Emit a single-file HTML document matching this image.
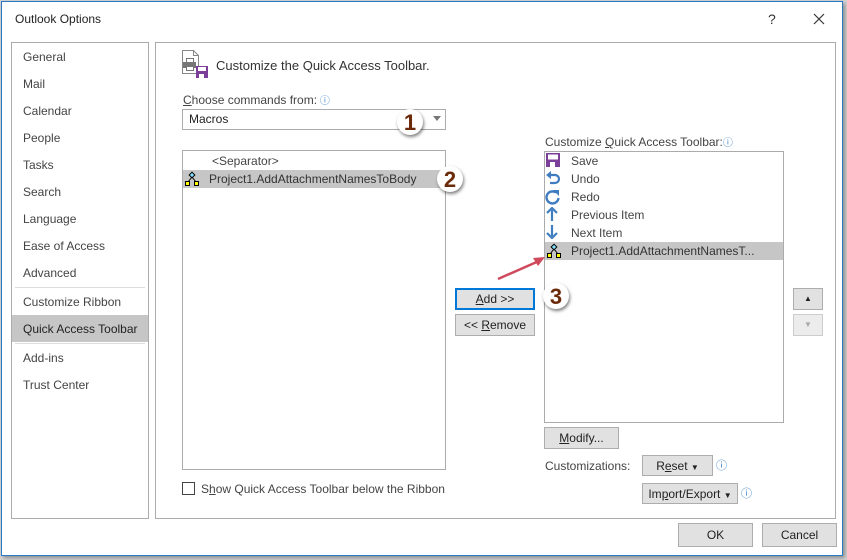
<!DOCTYPE html>
<html><head><meta charset="utf-8"><style>
*{box-sizing:border-box;margin:0;padding:0}
body{width:847px;height:560px;background:#d4d4d4;position:relative;overflow:hidden;font-family:"Liberation Sans",sans-serif;font-size:12px;color:#444}
.a{position:absolute}
.win{left:1px;top:1px;width:842px;height:555px;background:#fff;border:1px solid #2b78c5;box-shadow:2px 2px 4px rgba(0,0,0,.35)}
.box{border:1px solid #ababab;background:#fff}
.btn{border:1px solid #adadad;background:#e1e1e1;color:#222;text-align:center;line-height:20px}
.nav{left:23px;color:#444;font-size:12px}
.badge{width:26px;height:26px;border-radius:50%;background:#fff;box-shadow:1px 2px 3px rgba(0,0,0,.5);color:#6b2a0a;font-weight:bold;font-size:22px;text-align:center;line-height:27px}
.row{height:18px;line-height:18px}
u{text-decoration:underline}
</style></head><body>
<div class="a win"></div>
<div class="a" style="left:15px;top:12px;font-size:12px;color:#222">Outlook Options</div>
<div class="a" style="left:768px;top:11px;font-size:14px;color:#333">?</div>
<svg class="a" style="left:813px;top:13px" width="12" height="12" viewBox="0 0 12 12"><path d="M1 1L11 11M11 1L1 11" stroke="#333" stroke-width="1.2"/></svg>

<div class="a box" style="left:11px;top:42px;width:138px;height:477px"></div>
<div class="a nav" style="top:50px">General</div>
<div class="a nav" style="top:77px">Mail</div>
<div class="a nav" style="top:104px">Calendar</div>
<div class="a nav" style="top:131px">People</div>
<div class="a nav" style="top:158px">Tasks</div>
<div class="a nav" style="top:185px">Search</div>
<div class="a nav" style="top:212px">Language</div>
<div class="a nav" style="top:239px">Ease of Access</div>
<div class="a nav" style="top:266px">Advanced</div>
<div class="a" style="left:15px;top:287px;width:130px;height:1px;background:#ddd"></div>
<div class="a nav" style="top:295px">Customize Ribbon</div>
<div class="a" style="left:12px;top:315px;width:136px;height:27px;background:#c6c6c6"></div>
<div class="a nav" style="top:322px;color:#222">Quick Access Toolbar</div>
<div class="a" style="left:15px;top:343px;width:130px;height:1px;background:#ddd"></div>
<div class="a nav" style="top:351px">Add-ins</div>
<div class="a nav" style="top:378px">Trust Center</div>

<div class="a box" style="left:155px;top:42px;width:681px;height:477px"></div>
<svg class="a" style="left:180px;top:48px" width="30" height="32" viewBox="0 0 30 32">
<path d="M2.5 2.5h11l5 5v18h-16z" fill="#fff" stroke="#888"/><path d="M13.5 2.5v5h5" fill="none" stroke="#888"/>
<rect x="6.5" y="10.5" width="7" height="4" fill="#fff" stroke="#777"/><rect x="3" y="14" width="13" height="6" fill="#777"/><rect x="6.5" y="18.5" width="7" height="4" fill="#fff" stroke="#777"/>
<rect x="16" y="18" width="12" height="12" fill="#7b3f99"/><rect x="18" y="19" width="8" height="4" fill="#fff"/><rect x="19" y="26" width="5" height="4" fill="#fff"/></svg>
<div class="a" style="left:216px;top:58px;font-size:13px;color:#333">Customize the Quick Access Toolbar.</div>
<div class="a" style="left:183px;top:92px"><u>C</u>hoose commands from:<span style="color:#3a7fc4;font-size:10px"> ⓘ</span></div>
<div class="a box" style="left:182px;top:109px;width:264px;height:21px;padding-left:6px;line-height:19px;color:#222">Macros</div>
<div class="a" style="left:433px;top:116px;border:4px solid transparent;border-top:5px solid #777"></div>
<div class="a badge" style="left:397px;top:109px">1</div>

<div class="a box" style="left:182px;top:150px;width:264px;height:320px"></div>
<div class="a row" style="left:212px;top:152px">&lt;Separator&gt;</div>
<div class="a row" style="left:183px;top:170px;width:262px;background:#c6c6c6"></div>
<svg class="a" style="left:184px;top:171px" width="16" height="16" viewBox="0 0 16 16"><path d="M8 6L4 11M8 6l4 5" stroke="#000"/><rect x="6" y="2" width="4" height="4" fill="#7fe0ff" stroke="#000" transform="rotate(45 8 4)"/><rect x="1.5" y="10.5" width="4" height="4" fill="#ff0" stroke="#000"/><rect x="10.5" y="10.5" width="4" height="4" fill="#ff0" stroke="#000"/></svg>
<div class="a row" style="left:209px;top:170px;color:#333">Project1.AddAttachmentNamesToBody</div>
<div class="a badge" style="left:437px;top:166px">2</div>

<div class="a" style="left:182px;top:482px;width:13px;height:13px;border:1px solid #444;background:#fff"></div>
<div class="a" style="left:201px;top:482px">S<u>h</u>ow Quick Access Toolbar below the Ribbon</div>

<div class="a btn" style="left:455px;top:288px;width:80px;height:22px;border:2px solid #0078d7;line-height:18px"><u>A</u>dd &gt;&gt;</div>
<div class="a btn" style="left:455px;top:314px;width:80px;height:22px">&lt;&lt; <u>R</u>emove</div>

<div class="a" style="left:545px;top:134px">Customize <u>Q</u>uick Access Toolbar:<span style="color:#3a7fc4;font-size:10px">ⓘ</span></div>
<div class="a box" style="left:544px;top:151px;width:240px;height:272px"></div>
<svg class="a" style="left:546px;top:153px" width="14" height="14" viewBox="0 0 14 14"><rect x="0" y="0" width="14" height="14" fill="#7b3f99"/><rect x="2" y="1.5" width="10" height="5" fill="#fff"/><rect x="4" y="9" width="5" height="5" fill="#fff"/></svg>
<div class="a row" style="left:571px;top:152px">Save</div>
<svg class="a" style="left:545px;top:171px" width="16" height="16" viewBox="0 0 16 16"><path d="M4 4h6a4 4 0 0 1 0 8H5" fill="none" stroke="#3f7dc0" stroke-width="2.2"/><path d="M1 4l5-4v8z" fill="#3f7dc0"/></svg>
<div class="a row" style="left:571px;top:170px">Undo</div>
<svg class="a" style="left:545px;top:189px" width="16" height="16" viewBox="0 0 16 16"><path d="M11 3.5A6 6 0 1 0 13.5 9" fill="none" stroke="#3f7dc0" stroke-width="2.4"/><path d="M8 1h6v6z" fill="#3f7dc0"/></svg>
<div class="a row" style="left:571px;top:188px">Redo</div>
<svg class="a" style="left:546px;top:207px" width="12" height="14" viewBox="0 0 12 14"><path d="M6 3v11" stroke="#3f7dc0" stroke-width="2.2"/><path d="M1 6l5-5 5 5" fill="none" stroke="#3f7dc0" stroke-width="2.2"/></svg>
<div class="a row" style="left:571px;top:206px">Previous Item</div>
<svg class="a" style="left:546px;top:225px" width="12" height="14" viewBox="0 0 12 14"><path d="M6 0v11" stroke="#3f7dc0" stroke-width="2.2"/><path d="M1 8l5 5 5-5" fill="none" stroke="#3f7dc0" stroke-width="2.2"/></svg>
<div class="a row" style="left:571px;top:224px">Next Item</div>
<div class="a row" style="left:545px;top:242px;width:238px;background:#c6c6c6"></div>
<svg class="a" style="left:546px;top:243px" width="16" height="16" viewBox="0 0 16 16"><path d="M8 6L4 11M8 6l4 5" stroke="#000"/><rect x="6" y="2" width="4" height="4" fill="#7fe0ff" stroke="#000" transform="rotate(45 8 4)"/><rect x="1.5" y="10.5" width="4" height="4" fill="#ff0" stroke="#000"/><rect x="10.5" y="10.5" width="4" height="4" fill="#ff0" stroke="#000"/></svg>
<div class="a row" style="left:571px;top:242px;color:#333">Project1.AddAttachmentNamesT...</div>
<svg class="a" style="left:495px;top:252px" width="52" height="30" viewBox="0 0 52 30"><path d="M3 27L44 9" stroke="#d04a5e" stroke-width="2.5"/><path d="M50 5L38 6l5 8z" fill="#d04a5e"/></svg>
<div class="a badge" style="left:543px;top:283px">3</div>

<div class="a btn" style="left:793px;top:288px;width:30px;height:22px;font-size:8px">▲</div>
<div class="a btn" style="left:793px;top:314px;width:30px;height:22px;font-size:8px;color:#aaa;border-color:#ccc;background:#ececec">▼</div>

<div class="a btn" style="left:544px;top:427px;width:75px;height:22px"><u>M</u>odify...</div>
<div class="a" style="left:545px;top:459px">Customizations:</div>
<div class="a btn" style="left:642px;top:455px;width:71px;height:21px">R<u>e</u>set <span style="font-size:8px">▼</span></div>
<div class="a" style="left:716px;top:457px;color:#3a7fc4;font-size:11px">ⓘ</div>
<div class="a btn" style="left:642px;top:483px;width:96px;height:21px">Im<u>p</u>ort/Export <span style="font-size:8px">▼</span></div>
<div class="a" style="left:741px;top:485px;color:#3a7fc4;font-size:11px">ⓘ</div>

<div class="a btn" style="left:678px;top:523px;width:75px;height:24px;line-height:22px">OK</div>
<div class="a btn" style="left:762px;top:523px;width:75px;height:24px;line-height:22px">Cancel</div>
</body></html>
